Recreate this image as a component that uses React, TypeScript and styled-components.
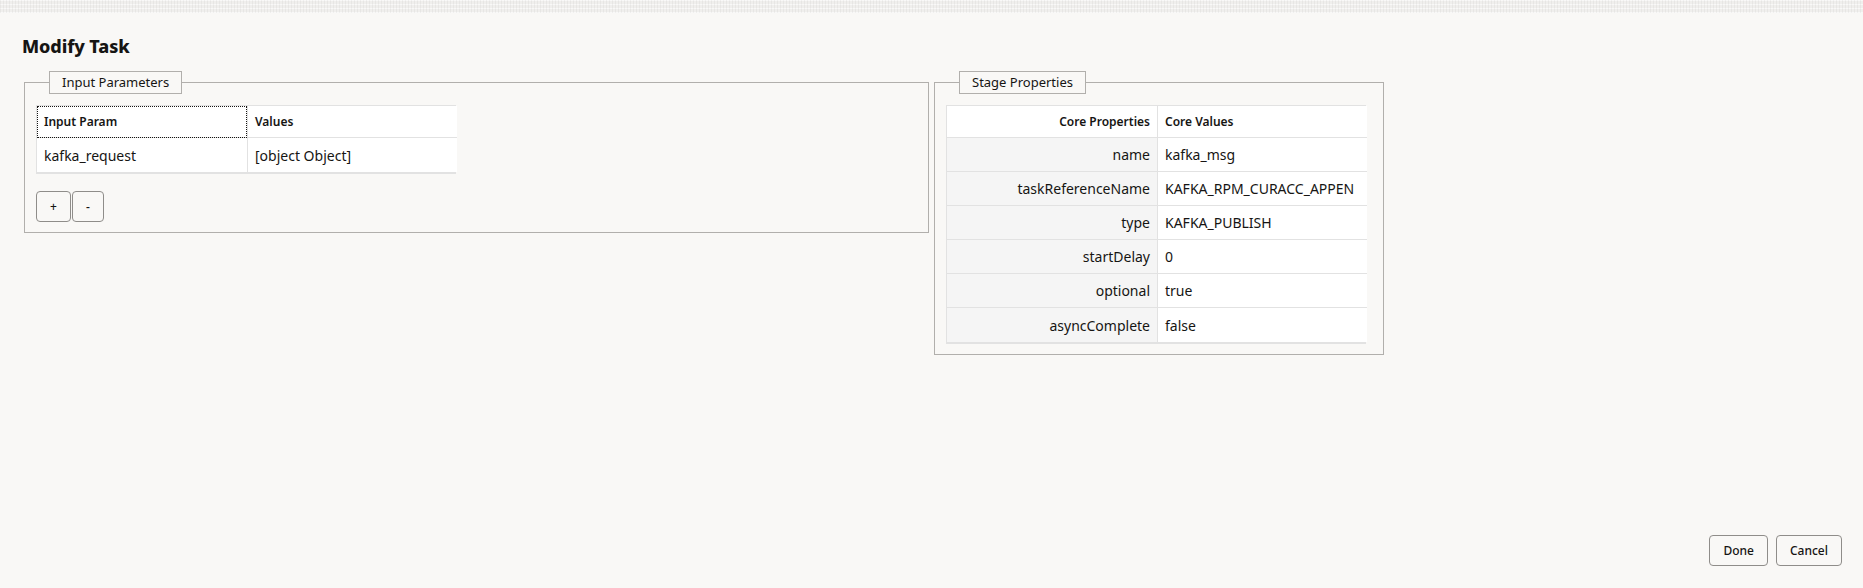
import React from 'react';
import styled, { createGlobalStyle } from 'styled-components';

const textColor = '#161513';
const pageBg = '#f9f8f6';
const frameBorder = '#b1afac';
const cellBorder = '#e2e2e2';
const labelBg = '#f5f5f5';

const GlobalStyle = createGlobalStyle`
  * { box-sizing: border-box; }
  html, body {
    margin: 0;
    padding: 0;
    background: ${pageBg};
    color: ${textColor};
    font-family: "Noto Sans", "Liberation Sans", sans-serif;
  }
`;

const Page = styled.div`
  display: flex;
  flex-direction: column;
  min-height: 100vh;
  width: 100%;
`;

const TopBand = styled.div`
  height: 13px;
  background-color: #f0efed;
  background-image:
    repeating-linear-gradient(90deg, rgba(0, 0, 0, 0.04) 0 1px, transparent 1px 3px),
    repeating-linear-gradient(0deg, rgba(255, 255, 255, 0.6) 0 1px, transparent 1px 4px);
`;

const Content = styled.div`
  padding: 0 22px;
`;

const Title = styled.h1`
  margin: 21px 0 13px;
  font-size: 18px;
  line-height: 24px;
  font-weight: 800;
  letter-spacing: -0.1px;
`;

const Panels = styled.div`
  display: flex;
  align-items: flex-start;
  gap: 5px;
  padding-left: 2px;
`;

const Frame = styled.fieldset<{ $width: number }>`
  width: ${p => p.$width}px;
  margin: 0;
  padding: 11px 11px 10px;
  border: 1px solid ${frameBorder};
`;

const Legend = styled.legend`
  margin-left: 13px;
  padding: 0 12px;
  height: 23px;
  line-height: 21px;
  font-size: 13px;
  border: 1px solid ${frameBorder};
  background: ${pageBg};
`;

const Grid = styled.div`
  display: grid;
  grid-template-columns: 210px 210px;
  width: 420px;
  background: #fff;
  border: 1px solid ${cellBorder};
  border-bottom-width: 2px;
`;

const HeadCell = styled.div<{ $right?: boolean; $focused?: boolean }>`
  display: flex;
  align-items: center;
  justify-content: ${p => (p.$right ? 'flex-end' : 'flex-start')};
  height: 32px;
  padding: 0 7px;
  font-size: 12px;
  font-weight: 600;
  background: #fff;
  border-bottom: 1px solid ${cellBorder};
  & + & { border-left: 1px solid ${cellBorder}; }
  outline: ${p => (p.$focused ? `1px dotted ${textColor}` : 'none')};
  outline-offset: -1px;
`;

const Cell = styled.div<{ $label?: boolean; $last?: boolean }>`
  display: flex;
  align-items: center;
  justify-content: ${p => (p.$label ? 'flex-end' : 'flex-start')};
  height: 34px;
  padding: 0 7px;
  font-size: 14px;
  white-space: nowrap;
  overflow: hidden;
  background: ${p => (p.$label ? labelBg : '#fff')};
  border-bottom: ${p => (p.$last ? 'none' : `1px solid ${cellBorder}`)};
`;

const ValueCell = styled(Cell)`
  border-left: 1px solid ${cellBorder};
`;

const ButtonRow = styled.div<{ $gap: number; $top?: number }>`
  display: flex;
  gap: ${p => p.$gap}px;
  margin-top: ${p => p.$top ?? 0}px;
`;

const Button = styled.button`
  height: 31px;
  padding: 0 13px;
  font-family: inherit;
  font-size: 12px;
  font-weight: 500;
  color: ${textColor};
  background: transparent;
  border: 1px solid #8f8d8a;
  border-radius: 4px;
  cursor: pointer;
`;

const Footer = styled.div`
  margin-top: auto;
  display: flex;
  justify-content: flex-end;
  padding: 0 21px 22px;
`;

const stageProps: [string, string][] = [
  ['name', 'kafka_msg'],
  ['taskReferenceName', 'KAFKA_RPM_CURACC_APPEN'],
  ['type', 'KAFKA_PUBLISH'],
  ['startDelay', '0'],
  ['optional', 'true'],
  ['asyncComplete', 'false'],
];

export default function App() {
  return (
    <Page>
      <GlobalStyle />
      <TopBand />
      <Content>
        <Title>Modify Task</Title>
        <Panels>
          <Frame $width={905}>
            <Legend>Input Parameters</Legend>
            <Grid>
              <HeadCell $focused>Input Param</HeadCell>
              <HeadCell>Values</HeadCell>
              <Cell $last>kafka_request</Cell>
              <ValueCell $last>[object Object]</ValueCell>
            </Grid>
            <ButtonRow $gap={1} $top={17}>
              <Button>+</Button>
              <Button>-</Button>
            </ButtonRow>
          </Frame>
          <Frame $width={450}>
            <Legend>Stage Properties</Legend>
            <Grid>
              <HeadCell $right>Core Properties</HeadCell>
              <HeadCell>Core Values</HeadCell>
              {stageProps.map(([key, value], i) => (
                <React.Fragment key={key}>
                  <Cell $label $last={i === stageProps.length - 1}>{key}</Cell>
                  <ValueCell $last={i === stageProps.length - 1}>{value}</ValueCell>
                </React.Fragment>
              ))}
            </Grid>
          </Frame>
        </Panels>
      </Content>
      <Footer>
        <ButtonRow $gap={8}>
          <Button>Done</Button>
          <Button>Cancel</Button>
        </ButtonRow>
      </Footer>
    </Page>
  );
}
